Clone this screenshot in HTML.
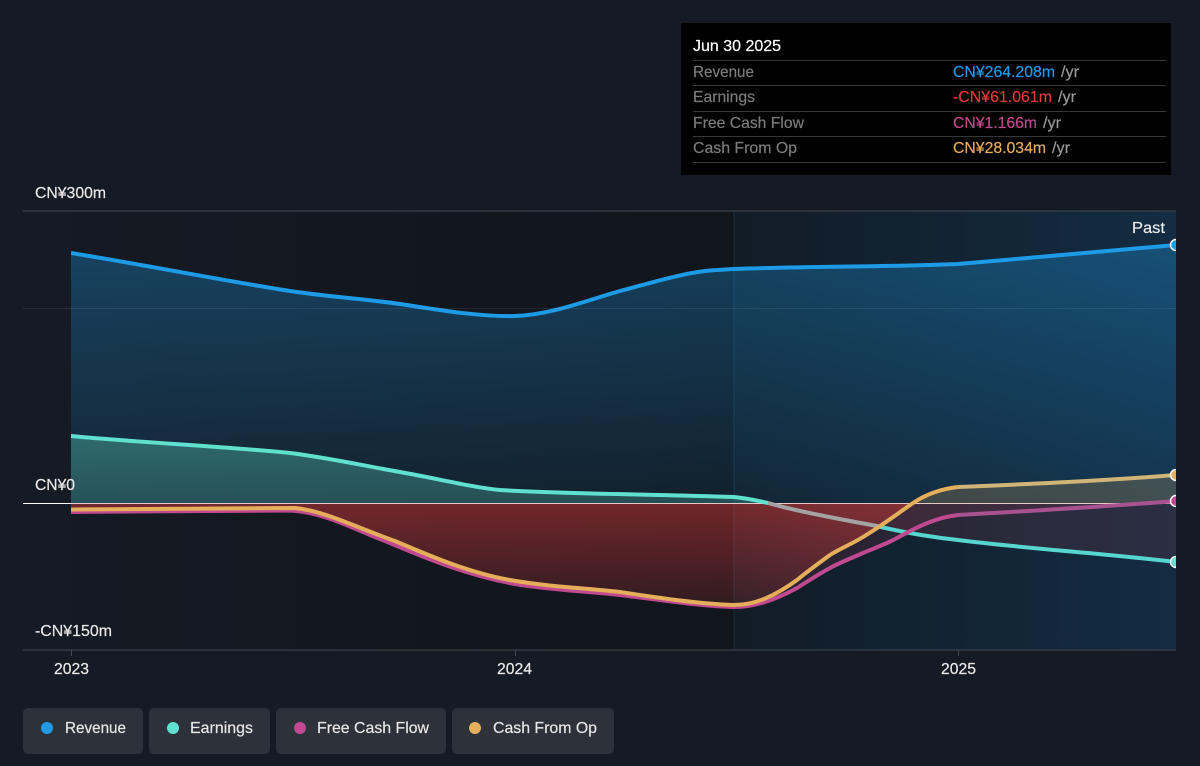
<!DOCTYPE html>
<html><head><meta charset="utf-8"><style>
html,body{margin:0;padding:0;background:#151b24;width:1200px;height:766px;overflow:hidden}
svg{display:block}
text{font-family:"Liberation Sans",sans-serif;font-size:16px;stroke-width:.2px}
</style></head><body>
<svg width="1200" height="766" viewBox="0 0 1200 766" xmlns="http://www.w3.org/2000/svg">
<defs>
<linearGradient id="bgL" x1="0" y1="0" x2="1" y2="0"><stop offset="0" stop-color="#141a23"/><stop offset="1" stop-color="#11151c"/></linearGradient>
<linearGradient id="ov" x1="0" y1="0" x2="1" y2="0"><stop offset="0" stop-color="#111c26"/><stop offset="1" stop-color="#132c42"/></linearGradient>
<linearGradient id="blue" gradientUnits="userSpaceOnUse" x1="0" y1="245" x2="0" y2="503"><stop offset="0" stop-color="#1e9be6" stop-opacity=".32"/><stop offset="1" stop-color="#1e9be6" stop-opacity=".08"/></linearGradient>
<linearGradient id="teal" gradientUnits="userSpaceOnUse" x1="0" y1="436" x2="0" y2="503"><stop offset="0" stop-color="#60e0cf" stop-opacity=".34"/><stop offset="1" stop-color="#60e0cf" stop-opacity=".24"/></linearGradient>
<linearGradient id="red" gradientUnits="userSpaceOnUse" x1="0" y1="503" x2="0" y2="608"><stop offset="0" stop-color="#e23a3a" stop-opacity=".46"/><stop offset="1" stop-color="#e23a3a" stop-opacity=".14"/></linearGradient>
<linearGradient id="redfade" gradientUnits="userSpaceOnUse" x1="734" y1="0" x2="913" y2="0"><stop offset="0" stop-color="#e23a3a" stop-opacity=".03"/><stop offset=".6" stop-color="#e23a3a" stop-opacity=".12"/><stop offset="1" stop-color="#e23a3a" stop-opacity=".16"/></linearGradient>
<clipPath id="plot"><rect x="71" y="211" width="1105" height="439"/></clipPath>
</defs>

<rect x="71" y="211" width="663" height="439" fill="url(#bgL)"/>
<rect x="734" y="211" width="442" height="439" fill="url(#ov)"/>
<rect x="733.500" y="211" width="1" height="439" fill="#18303f"/>

<g clip-path="url(#plot)">
<!-- revenue area -->
<path fill="url(#blue)" d="M71 253C145 265 220 280 290 291C330 297 365 299 400 304C440 310 480 317 515 316C550 315 585 301 620 291C650 283 680 274 705 271C715 270 725 269.500 734 269C775 267.500 815 267 850 266.500C890 266 925 265.500 958 264C1030 258 1100 251 1176 245L1176 503.500L71 503.500Z"/>
<!-- earnings positive -->
<path fill="url(#teal)" d="M71 436C145 443 220 446 290 453C330 458 365 466 400 472C440 479 470 487 500 490C560 494 650 494 734 497C745 498 755 500 768 503.500L71 503.500Z"/>
<!-- negative, bounded by cash line -->
<path fill="url(#red)" d="M71 503.500L71 509.500C145 508.500 220 508.500 295 508C325 511 355 527 395 541C430 556 470 573 510 580C550 587 585 588 620 592C660 598 700 604 734 605C755 605 775 596 797 580C808 571 819 563 830 555C841 548 852 544 863 537C880 527 897 514 913 503.500Z"/>
<path fill="url(#redfade)" d="M734 503.500L734 605C755 605 775 596 797 580C808 571 819 563 830 555C841 548 852 544 863 537C880 527 897 514 913 503.500Z"/>
<!-- between cash and fcf on the right -->
<path fill="#d0405a" fill-opacity=".13" d="M734 605C755 605 775 596 797 580C808 571 819 563 830 555C841 548 852 544 863 537C880 527 897 514 913 503.500L1176 503.500L1176 501C1100 507 1030 511 958 515C950 516 940 518 930 522C919 526 908 532 897 538C886 544 875 548 863 553C852 558 841 562 830 568C819 574 808 581 797 588C775 600 755 607 734 607Z"/>
<!-- earnings negative -->
<path fill="#8a3a4c" fill-opacity=".2" d="M877 525C905 533 930 537 958 540C1030 549 1100 553 1176 562L1176 503.500L913 503.500C900 512 890 518 877 525Z"/>
<!-- cash positive -->
<path fill="#e5ae5b" fill-opacity=".22" d="M913 503.500C925 495 940 489 958 487C1030 484 1100 481 1176 475L1176 503.500Z"/>
<rect x="71" y="503" width="1105" height="1" fill="#e8c9c9"/>

<path fill="none" stroke="#1e9be6" stroke-width="4" d="M71 253C145 265 220 280 290 291C330 297 365 299 400 304C440 310 480 317 515 316C550 315 585 301 620 291C650 283 680 274 705 271C715 270 725 269.500 734 269C775 267.500 815 267 850 266.500C890 266 925 265.500 958 264C1030 258 1100 251 1176 245"/>
<path fill="none" stroke="#60e0cf" stroke-width="4" d="M71 436C145 443 220 446 290 453C330 458 365 466 400 472C440 479 470 487 500 490C560 494 650 494 734 497C745 498 755 500 768 503"/>
<path fill="none" stroke="#a3a3a3" stroke-width="4" d="M768 503C800 512 825 516 850 521L877 526"/>
<path fill="none" stroke="#57d6d0" stroke-width="4" d="M877 526C905 533 930 537 958 540C1030 549 1100 553 1176 562"/>
<path fill="none" stroke="#c04a90" stroke-width="4" d="M71 512C145 511 220 511 290 510.500C325 512 355 530 390 543C430 560 470 576 515 584C550 590 585 591 620 595C660 600 700 606 734 607C755 607 775 600 797 588C808 581 819 574 830 568C841 562 852 558 863 553C875 548 886 544 897 538C908 532 919 526 930 522C940 518 950 516 958 515"/>
<path fill="none" stroke="#a8528f" stroke-width="4" d="M958 515C1030 511 1100 507 1176 501"/>
<path fill="none" stroke="#e5ae5b" stroke-width="4" d="M71 509.500C145 508.500 220 508.500 295 508C325 511 355 527 395 541C430 556 470 573 510 580C550 587 585 588 620 592C660 598 700 604 734 605C755 605 775 596 797 580C808 571 819 563 830 555C841 548 852 544 863 537C880 527 897 514 913 503C925 495 940 489 958 487"/>
<path fill="none" stroke="#d1b478" stroke-width="4" d="M958 487C1030 484 1100 481 1176 475"/>
</g>

<rect x="23" y="210.500" width="1153" height="1" fill="#44484f"/>
<rect x="23" y="308" width="48" height="1" fill="#2a2f37"/>
<rect x="71" y="308" width="1105" height="1" fill="#ffffff" fill-opacity=".07"/>
<rect x="23" y="503" width="48" height="1" fill="#ffffff"/>
<rect x="23" y="649.500" width="1153" height="1" fill="#44484f"/>
<rect x="71" y="650" width="1" height="6" fill="#44484f"/>
<rect x="515" y="650" width="1" height="6" fill="#44484f"/>
<rect x="958" y="650" width="1" height="6" fill="#44484f"/>

<g clip-path="url(#plot)" stroke="#ffffff" stroke-width="1.500">
<circle cx="1176" cy="245" r="5.500" fill="#1e9be6"/>
<circle cx="1176" cy="475" r="5.500" fill="#e5ae5b"/>
<circle cx="1176" cy="501" r="5.500" fill="#c04a90"/>
<circle cx="1176" cy="562" r="5.500" fill="#60e0cf"/>
</g>

<g fill="#eaeaea" stroke="#eaeaea">
<text x="35" y="198" textLength="71" lengthAdjust="spacingAndGlyphs">CN¥300m</text>
<text x="35" y="490" textLength="40" lengthAdjust="spacingAndGlyphs">CN¥0</text>
<text x="35" y="636" textLength="77" lengthAdjust="spacingAndGlyphs">-CN¥150m</text>
<text x="54" y="674" textLength="35" lengthAdjust="spacingAndGlyphs">2023</text>
<text x="497" y="674" textLength="35" lengthAdjust="spacingAndGlyphs">2024</text>
<text x="941" y="674" textLength="35" lengthAdjust="spacingAndGlyphs">2025</text>
<text x="1132" y="233" textLength="33" lengthAdjust="spacingAndGlyphs">Past</text>
</g>

<!-- tooltip -->
<rect x="681" y="23" width="490" height="152" fill="#000"/>
<g fill="#373737">
<rect x="693" y="60" width="473" height="1"/>
<rect x="693" y="85" width="473" height="1"/>
<rect x="693" y="111" width="473" height="1"/>
<rect x="693" y="136" width="473" height="1"/>
<rect x="693" y="162" width="473" height="1"/>
</g>
<text x="693" y="51" fill="#fff" stroke="#fff" textLength="88" lengthAdjust="spacingAndGlyphs">Jun 30 2025</text>
<g fill="#7b7b7b" stroke="#7b7b7b">
<text x="693" y="77" textLength="61" lengthAdjust="spacingAndGlyphs">Revenue</text>
<text x="693" y="102" textLength="62" lengthAdjust="spacingAndGlyphs">Earnings</text>
<text x="693" y="128" textLength="111" lengthAdjust="spacingAndGlyphs">Free Cash Flow</text>
<text x="693" y="153" textLength="104" lengthAdjust="spacingAndGlyphs">Cash From Op</text>
</g>
<text x="953" y="77" fill="#1e9be6" stroke="#1e9be6" textLength="102" lengthAdjust="spacingAndGlyphs">CN¥264.208m</text>
<text x="953" y="102" fill="#e23a3a" stroke="#e23a3a" textLength="99" lengthAdjust="spacingAndGlyphs">-CN¥61.061m</text>
<text x="953" y="128" fill="#c04a90" stroke="#c04a90" textLength="84" lengthAdjust="spacingAndGlyphs">CN¥1.166m</text>
<text x="953" y="153" fill="#e5ae5b" stroke="#e5ae5b" textLength="93" lengthAdjust="spacingAndGlyphs">CN¥28.034m</text>
<g fill="#9a9a9a" stroke="#9a9a9a">
<text x="1061" y="77" textLength="18" lengthAdjust="spacingAndGlyphs">/yr</text>
<text x="1058" y="102" textLength="18" lengthAdjust="spacingAndGlyphs">/yr</text>
<text x="1043" y="128" textLength="18" lengthAdjust="spacingAndGlyphs">/yr</text>
<text x="1052" y="153" textLength="18" lengthAdjust="spacingAndGlyphs">/yr</text>
</g>

<!-- legend -->
<g fill="#2c313a">
<rect x="23" y="708" width="120" height="46" rx="5"/>
<rect x="149" y="708" width="121" height="46" rx="5"/>
<rect x="276" y="708" width="170" height="46" rx="5"/>
<rect x="452" y="708" width="162" height="46" rx="5"/>
</g>
<circle cx="47" cy="728" r="6" fill="#1e9be6"/>
<circle cx="173" cy="728" r="6" fill="#60e0cf"/>
<circle cx="300" cy="728" r="6" fill="#c04a90"/>
<circle cx="475" cy="728" r="6" fill="#e5ae5b"/>
<g fill="#e6e6e6" stroke="#e6e6e6">
<text x="65" y="733" textLength="61" lengthAdjust="spacingAndGlyphs">Revenue</text>
<text x="190" y="733" textLength="63" lengthAdjust="spacingAndGlyphs">Earnings</text>
<text x="317" y="733" textLength="112" lengthAdjust="spacingAndGlyphs">Free Cash Flow</text>
<text x="493" y="733" textLength="104" lengthAdjust="spacingAndGlyphs">Cash From Op</text>
</g>
</svg>
</body></html>
